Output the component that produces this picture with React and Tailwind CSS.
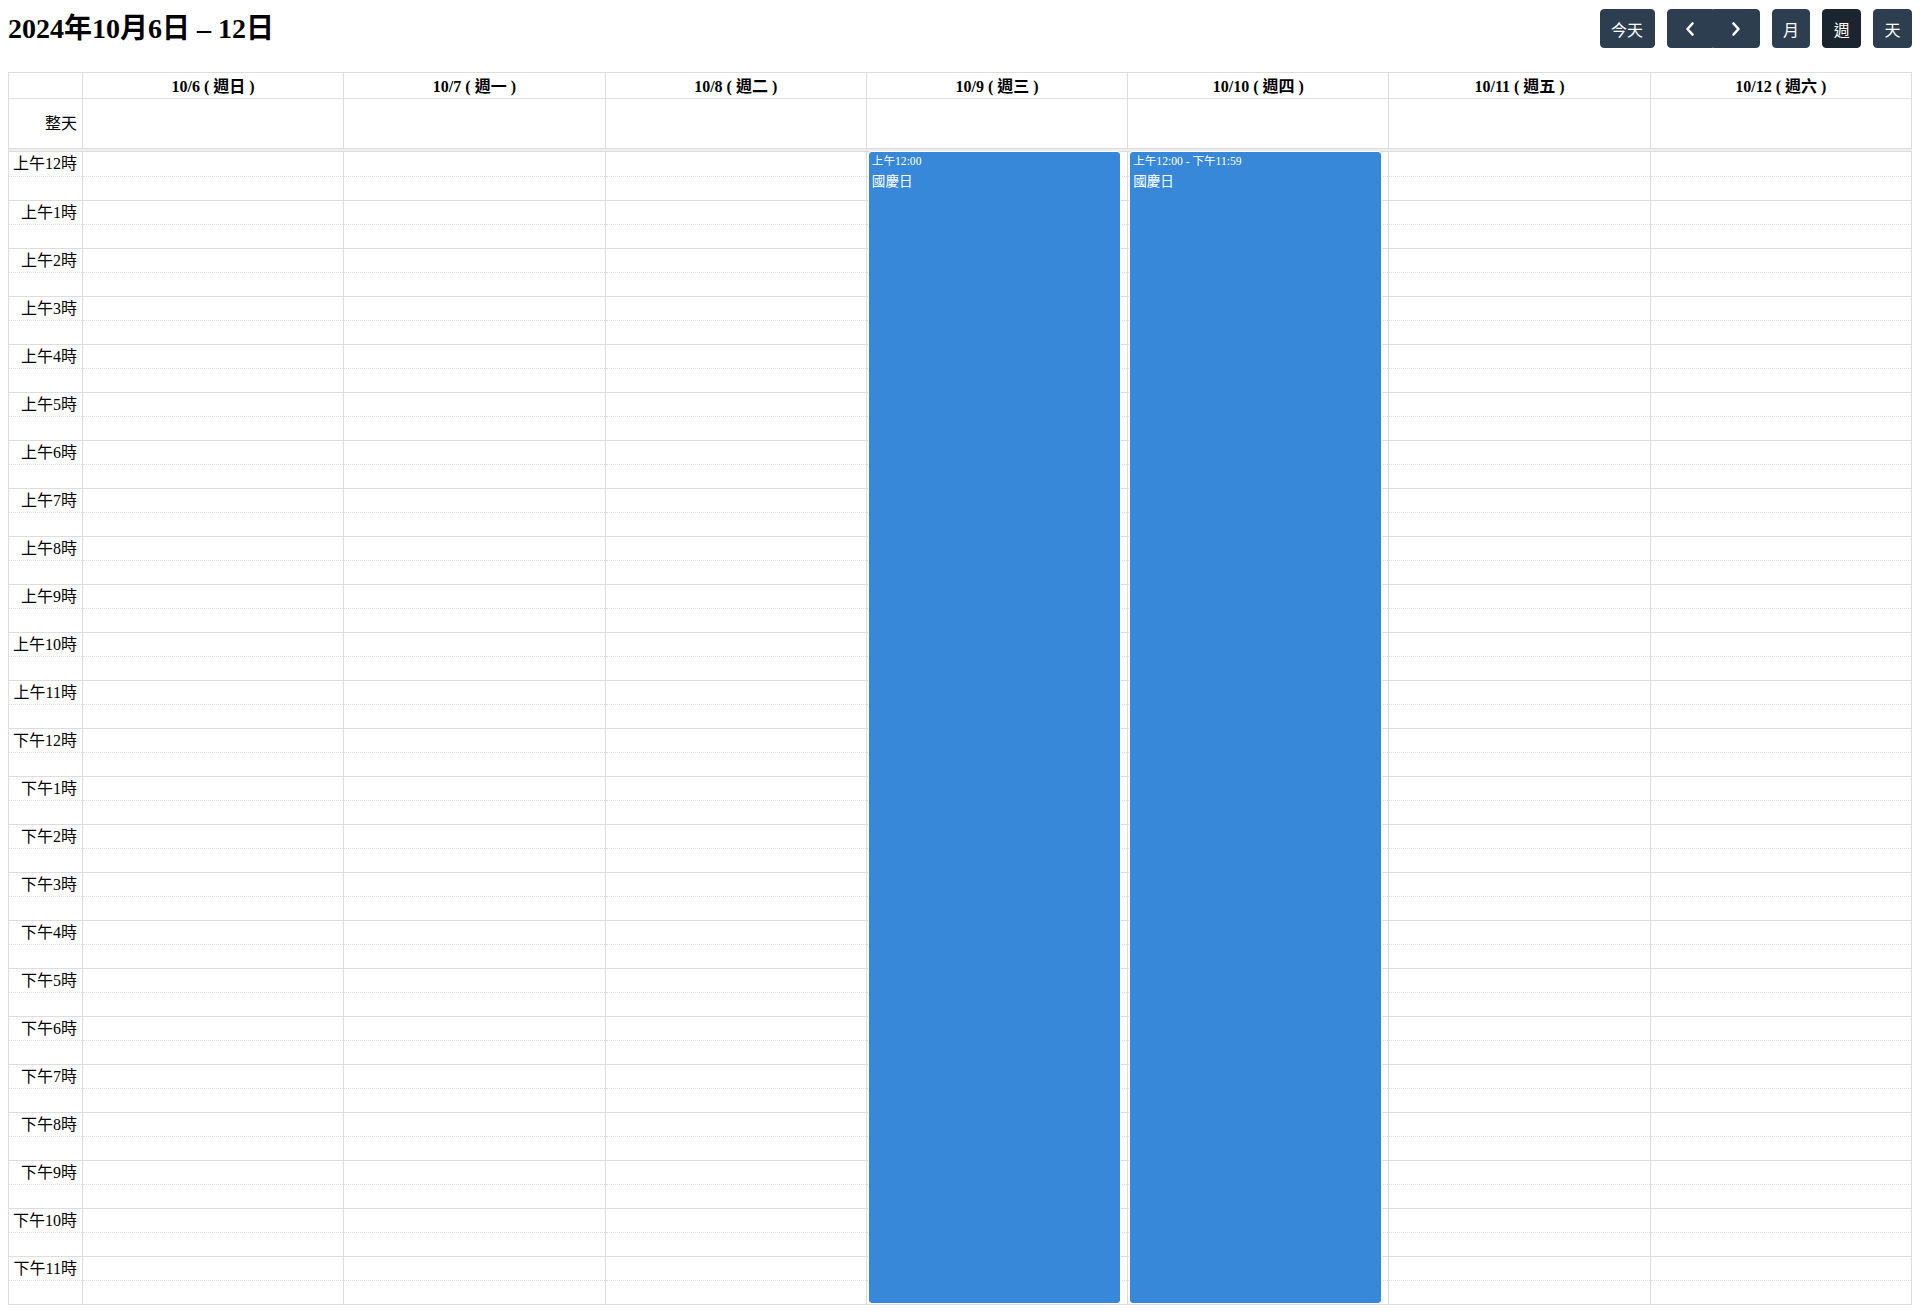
import React from "react";

const days = [
  ["10/6", "週日"],
  ["10/7", "週一"],
  ["10/8", "週二"],
  ["10/9", "週三"],
  ["10/10", "週四"],
  ["10/11", "週五"],
  ["10/12", "週六"],
];

const hourLabels = Array.from({ length: 24 }, (_, h) => {
  const ampm = h < 12 ? "上午" : "下午";
  const hh = h % 12 === 0 ? 12 : h % 12;
  return `${ampm}${hh}時`;
});

const events = {
  3: { time: "上午12:00", title: "國慶日" },
  4: { time: "上午12:00 - 下午11:59", title: "國慶日" },
};

const GRID = "grid grid-cols-[74px_repeat(7,minmax(0,1fr))]";

function slotClass(i) {
  return [
    i === 0 ? "h-[25px]" : "h-[24px]",
    "border-b border-[#ddd]",
    i % 2 === 0 ? "border-dotted" : "border-solid",
  ].join(" ");
}

function Chevron({ dir }) {
  return (
    <svg width="10" height="16" viewBox="0 0 10 16" fill="none">
      <polyline
        points={dir === "left" ? "7.5,2.5 2.5,8 7.5,13.5" : "2.5,2.5 7.5,8 2.5,13.5"}
        stroke="white"
        strokeWidth="2.6"
        strokeLinecap="round"
        strokeLinejoin="round"
      />
    </svg>
  );
}

function Btn({ children, active, className = "" }) {
  return (
    <button
      className={`flex h-[39px] items-center justify-center border text-[16px] leading-6 text-white ${
        active ? "border-[#1a252f] bg-[#1a252f]" : "border-[#2c3e50] bg-[#2c3e50]"
      } ${className}`}
    >
      {children}
    </button>
  );
}

export default function App() {
  return (
    <div className="min-h-screen bg-white px-2 pb-2 pt-2 text-black [font-family:'Liberation_Serif','Noto_Sans_CJK_TC',serif]">
      {/* Toolbar */}
      <div className="mb-[23px] flex h-[41px] items-center justify-between">
        <h2 className="text-[28px] font-bold leading-[32px]">2024年10月6日 – 12日</h2>
        <div className="flex items-center gap-3 [font-family:'Noto_Sans_CJK_TC',sans-serif]">
          <Btn className="w-[55px] rounded-[4px]">今天</Btn>
          <div className="flex">
            <Btn className="w-[46.5px] rounded-l-[4px]">
              <Chevron dir="left" />
            </Btn>
            <Btn className="w-[46.5px] rounded-r-[4px]">
              <Chevron dir="right" />
            </Btn>
          </div>
          <Btn className="w-[38.8px] rounded-[4px]">月</Btn>
          <Btn active className="w-[38.8px] rounded-[4px]">週</Btn>
          <Btn className="w-[38.8px] rounded-[4px]">天</Btn>
        </div>
      </div>

      {/* Calendar table */}
      <div className="border-l border-t border-[#ddd] text-[16px]">
        {/* Header */}
        <div className={`${GRID} border-b border-[#ddd]`}>
          <div className="h-[25px] border-r border-[#ddd]" />
          {days.map(([d, w]) => (
            <div
              key={d}
              className="flex h-[25px] items-center justify-center whitespace-pre border-r border-[#ddd] pt-[2px] font-bold leading-5"
            >
              {`${d} ( ${w} )`}
            </div>
          ))}
        </div>

        {/* All-day row */}
        <div className={`${GRID} border-b border-[#ddd]`}>
          <div className="flex h-[49px] items-center justify-end border-r border-[#ddd] pr-[5px]">整天</div>
          {days.map(([d]) => (
            <div key={d} className="h-[49px] border-r border-[#ddd]" />
          ))}
        </div>

        {/* Divider */}
        <div className="h-[3px] border-b border-[#ddd] bg-[#eee]" />

        {/* Time grid */}
        <div className={GRID}>
          <div className="flex flex-col border-r border-[#ddd]">
            {Array.from({ length: 48 }, (_, i) => (
              <div key={i} className={`${slotClass(i)} pr-[5px] text-right leading-6`}>
                {i % 2 === 0 ? hourLabels[i / 2] : null}
              </div>
            ))}
          </div>
          {days.map(([d], ci) => (
            <div key={d} className="relative flex flex-col border-r border-[#ddd]">
              {Array.from({ length: 48 }, (_, i) => (
                <div key={i} className={slotClass(i)} />
              ))}
              {events[ci] && (
                <div className="absolute bottom-[2px] left-[2px] right-[7px] top-0 overflow-hidden rounded-[3px] border border-[#3788d8] bg-[#3788d8] px-[2px] pt-[1px] text-white shadow-[0_0_0_1px_#fff]">
                  <div className="whitespace-nowrap text-[11.6px] leading-4">{events[ci].time}</div>
                  <div className="text-[13.6px] leading-6">{events[ci].title}</div>
                </div>
              )}
            </div>
          ))}
        </div>
      </div>
    </div>
  );
}
